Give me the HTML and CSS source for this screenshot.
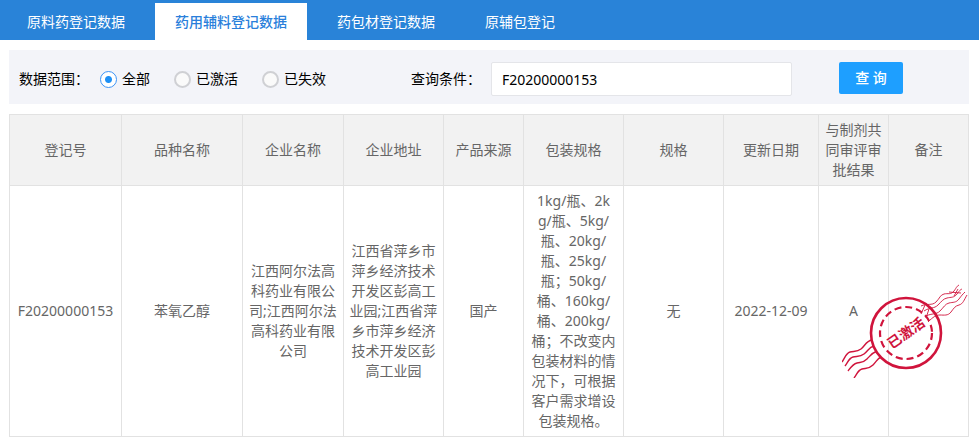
FILE: index.html
```html
<!DOCTYPE html>
<html lang="zh-CN">
<head>
    <meta charset="UTF-8">
    <meta name="viewport" content="width=device-width, initial-scale=1.0">
    <title>药用辅料登记数据</title>
    <link rel="stylesheet" href="styles.css">
</head>
<body>
    <nav class="tabs">
        <a class="tab" href="#">原料药登记数据</a>
        <a class="tab active" href="#">药用辅料登记数据</a>
        <a class="tab" href="#">药包材登记数据</a>
        <a class="tab" href="#">原辅包登记</a>
    </nav>

    <main class="content">
        <form class="filter">
            <div class="range">
                <span class="range-title" id="range-title">数据范围：</span>
                <div class="radios" role="radiogroup" aria-labelledby="range-title">
                    <label class="radio"><input type="radio" name="range" value="all" checked>全部</label>
                    <label class="radio"><input type="radio" name="range" value="active">已激活</label>
                    <label class="radio"><input type="radio" name="range" value="invalid">已失效</label>
                </div>
            </div>
            <label class="query-label" for="keyword">查询条件：</label>
            <input class="query-input" type="text" id="keyword" value="F20200000153">
            <button class="btn" type="button">查 询</button>
        </form>

        <table class="data">
            <colgroup>
                <col class="col-no">
                <col class="col-name">
                <col class="col-company">
                <col class="col-mid">
                <col class="col-small">
                <col class="col-mid">
                <col class="col-mid">
                <col class="col-date">
                <col class="col-result">
                <col class="col-small">
            </colgroup>
            <thead>
                <tr>
                    <th>登记号</th>
                    <th>品种名称</th>
                    <th>企业名称</th>
                    <th>企业地址</th>
                    <th>产品来源</th>
                    <th>包装规格</th>
                    <th>规格</th>
                    <th>更新日期</th>
                    <th>与制剂共同审评审批结果</th>
                    <th>备注</th>
                </tr>
            </thead>
            <tbody>
                <tr>
                    <td>F20200000153</td>
                    <td>苯氧乙醇</td>
                    <td>江西阿尔法高科药业有限公司;江西阿尔法高科药业有限公司</td>
                    <td>江西省萍乡市萍乡经济技术开发区彭高工业园;江西省萍乡市萍乡经济技术开发区彭高工业园</td>
                    <td>国产</td>
                    <td>1kg/瓶、2k<br>g/瓶、5kg/<br>瓶、20kg/<br>瓶、25kg/<br>瓶；50kg/<br>桶、160kg/<br>桶、200kg/<br>桶；不改变内包装材料的情况下，可根据客户需求增设包装规格。</td>
                    <td>无</td>
                    <td>2022-12-09</td>
                    <td>A</td>
                    <td class="remark">
                        <!-- 已激活印章 -->
                        <svg class="stamp" viewBox="0 0 126 94" role="img" aria-label="已激活">
                            <g class="waves">
                                <path d="M0 78C3 74 4 69 8 68S15 68 19 65S24 57 30 56"/>
                                <path d="M3 82C6 78 7 74 11 73S18 73 22 70S27 63 32 62"/>
                                <path d="M6 87C9 83 11 80 15 79S21 79 25 75S30 69 35 67"/>
                                <path d="M12 94C15 90 16 86 20 85S27 85 31 81S35 75 39 73"/>
                            </g>
                            <g class="waves thin">
                                <path d="M79 22C85 19 90 22 94 18S98 11 102 10S109 11 112 7S114 3 117 1"/>
                                <path d="M82 27C88 23 92 25 96 21S101 15 105 14S112 14 115 10S118 6 120 5"/>
                                <path d="M84 32C90 29 94 31 98 27S103 20 107 19S114 19 117 15S120 11 123 8"/>
                                <path d="M86 38C91 33 94 31 98 31S106 32 109 28S113 22 117 21S122 16 125 11"/>
                                <path d="M79 30L83 21M84 34L87 25M107 8L119 9M112 12L116 5"/>
                            </g>
                            <circle class="ring" cx="64" cy="49" r="35"/>
                            <circle class="ring-dashed" cx="64" cy="49" r="26"/>
                            <text class="stamp-text" x="64" y="54" text-anchor="middle" transform="rotate(-35 64 49)">已激活</text>
                        </svg>
                    </td>
                </tr>
            </tbody>
        </table>
    </main>
</body>
</html>
```

FILE: styles.css
```css
body {
    margin: 0;
    background: #fff;
    color: #000;
    font: 14px/20px "Noto Sans", "Noto Sans CJK SC", sans-serif;
}

/* 顶部标签 */
.tabs {
    display: flex;
    align-items: flex-end;
    gap: 10px;
    height: 40px;
    padding-left: 7px;
    background: #2983d8;
}
.tab {
    padding: 0 20px;
    line-height: 37px;
    color: #fff;
    text-decoration: none;
}
.tab.active {
    background: #fff;
    color: #2a7fdb;
    font-weight: 500;
}

.content {
    margin: 10px 10px 0 9px;
}

/* 查询条件 */
.filter {
    display: flex;
    align-items: center;
    padding: 12px 10px 8px;
    margin-bottom: 10px;
    background: #f3f4f9;
}
.range {
    display: flex;
    width: 392px;
}
.range-title {
    width: 81px;
}
.radios {
    display: flex;
    gap: 24px;
}
.radio {
    display: flex;
    align-items: center;
    gap: 5px;
}
.radio input {
    appearance: none;
    box-sizing: border-box;
    width: 17px;
    height: 17px;
    margin: 0;
    border: 2px solid #cfd0d4;
    border-radius: 50%;
    background: #fafafa;
}
.radio input:checked {
    border: 1px solid #3d94f6;
    background: radial-gradient(circle, #1e90f5 3px, #fff 4px);
}
.query-label {
    width: 80px;
}
.query-input {
    box-sizing: border-box;
    width: 301px;
    height: 34px;
    padding: 0 10px;
    border: 1px solid #e4e5e9;
    border-radius: 2px;
    background: #fff;
    color: #000;
    font: inherit;
}
.btn {
    align-self: flex-start;
    width: 64px;
    height: 32px;
    margin-left: 47px;
    padding: 0;
    border: none;
    border-radius: 2px;
    background: #1e9fff;
    color: #fff;
    font: inherit;
    font-weight: 500;
    cursor: pointer;
}

/* 数据表格 */
.data {
    width: 100%;
    table-layout: fixed;
    border-collapse: collapse;
    color: #666;
    text-align: center;
}
.data th, .data td {
    padding: 5px;
    border: 1px solid #e2e2e2;
    font-weight: normal;
    word-break: break-all;
}
.data th {
    background: #f2f2f2;
}
.col-no {
    width: 112px;
}
.col-name {
    width: 121px;
}
.col-company {
    width: 101px;
}
.col-mid {
    width: 100px;
}
.col-small {
    width: 80px;
}
.col-date {
    width: 95px;
}
.col-result {
    width: 70px;
}

/* 印章 */
.remark {
    position: relative;
}
.stamp {
    position: absolute;
    top: 98px;
    right: 0;
    width: 126px;
    height: 94px;
    fill: none;
    stroke: #d0143c;
}
.waves {
    stroke-width: 1.4;
}
.thin {
    stroke-width: 0.9;
}
.ring {
    stroke-width: 2.6;
}
.ring-dashed {
    stroke-width: 2.2;
    stroke-dasharray: 7 4;
}
.stamp-text {
    fill: #d0143c;
    stroke: none;
    font-size: 14px;
    font-weight: bold;
}
```
